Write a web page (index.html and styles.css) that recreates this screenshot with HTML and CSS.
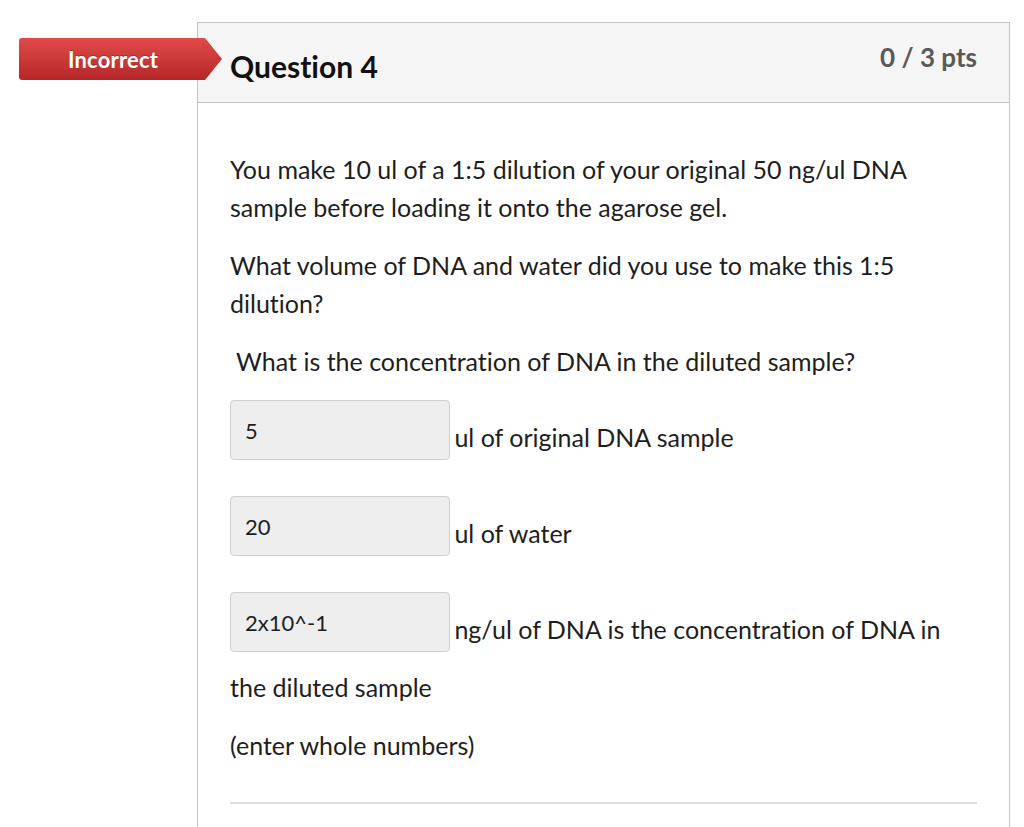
FILE: index.html
```html
<!DOCTYPE html>
<html lang="en">
<head>
  <meta charset="UTF-8" />
  <meta name="viewport" content="width=device-width, initial-scale=1.0" />
  <title>Question 4</title>
  <link rel="stylesheet" href="styles.css">
</head>
<body>
  <div class="page">
    <div class="answer-badge">Incorrect</div>
    <div class="question">
      <header class="question-header">
        <h2 class="question-title">Question 4</h2>
        <span class="question-points">0 / 3 pts</span>
      </header>
      <div class="question-body">
        <p>You make 10 ul of a 1:5 dilution of your original 50 ng/ul DNA sample before loading it onto the agarose gel.</p>
        <p>What volume of DNA and water did you use to make this 1:5 dilution?</p>
        <p>&nbsp;What is the concentration of DNA in the diluted sample?</p>
        <p><input class="answer" type="text" value="5"> ul of original DNA sample</p>
        <p><input class="answer" type="text" value="20"> ul of water</p>
        <p><input class="answer" type="text" value="2x10^-1"> ng/ul of DNA is the concentration of DNA in the diluted sample</p>
        <p>(enter whole numbers)</p>
        <hr class="divider">
      </div>
    </div>
  </div>
</body>
</html>
```

FILE: styles.css
```css
body {
  margin: 0;
  background-color: #fff;
  color: #1e1e1e;
  font-family: Lato, "Open Sans", sans-serif;
  font-variant-ligatures: none;
}
.page {
  position: relative;
  padding: 22px 0 0 197px;
}
/* red ribbon that hangs over the card edge */
.answer-badge {
  position: absolute;
  left: 19px;
  top: 38px;
  width: 203px;
  height: 42px;
  box-sizing: border-box;
  padding-right: 15px;
  border-radius: 3px 0 0 3px;
  background: linear-gradient(#e14a4a, #b52727);
  clip-path: polygon(0 0, 186px 0, 203px 50%, 186px 100%, 0 100%);
  color: #fff;
  font-size: 22px;
  font-weight: bold;
  letter-spacing: 0.2px;
  line-height: 44px;
  text-align: center;
  text-shadow: 0 -1px 0 rgba(0, 0, 0, 0.25);
}
.question {
  width: 813px;
  height: 900px;
  box-sizing: border-box;
  border: 1px solid #c4c4c4;
  border-bottom: none;
}
.question-header {
  display: flex;
  justify-content: space-between;
  align-items: flex-start;
  height: 79px;
  padding: 0 32px;
  background-color: #f5f5f5;
  border-bottom: 1px solid #c4c4c4;
}
.question-title {
  margin: 28px 0 0;
  font-size: 30px;
  line-height: 30px;
  font-weight: bold;
  color: #111;
}
.question-points {
  margin-top: 21px;
  font-size: 26px;
  line-height: 26px;
  font-weight: bold;
  color: #595959;
}
.question-body {
  padding: 47px 32px 0;
  font-size: 25px;
  line-height: 38px;
}
.question-body p {
  margin: 0 0 20px;
}
.answer {
  display: inline-block;
  width: 220px;
  height: 60px;
  box-sizing: border-box;
  margin: 0 -2px 16px 0;
  padding: 0 14px;
  border: 1px solid #cfcfcf;
  border-radius: 4px;
  background-color: #eeeeee;
  color: #1e1e1e;
  font-family: Lato, "Open Sans", sans-serif;
  font-size: 22px;
  vertical-align: 8px;
}
.divider {
  margin: 38px 0 0;
  height: 0;
  border: none;
  border-top: 2px solid #dedede;
}
```
